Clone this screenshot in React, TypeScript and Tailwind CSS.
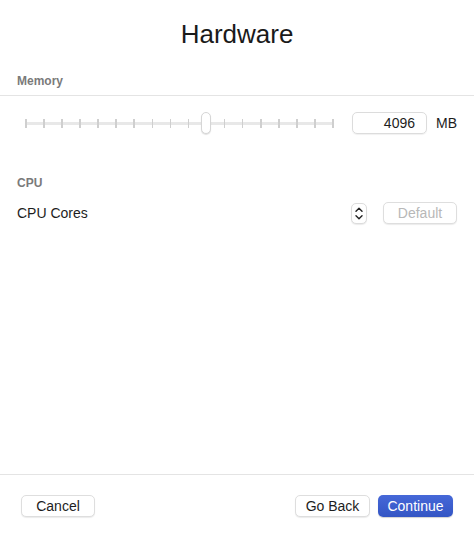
import React from 'react';

const TICKS = Array.from({ length: 18 });

function Slider() {
  return (
    <div className="relative w-[309px] h-[22px]">
      {/* track */}
      <div className="absolute left-0 right-0 top-[10px] h-[3px] rounded-full bg-[#e8e8e8]" />
      {/* ticks */}
      <div className="absolute inset-0 flex items-center justify-between">
        {TICKS.map((_, i) => (
          <span key={i} className="w-[1.5px] h-[9px] bg-[#cfcfcf]" />
        ))}
      </div>
      {/* thumb */}
      <div className="absolute left-[176px] top-0 w-[10px] h-[22px] rounded-full bg-white border border-[#d6d6d6] shadow-[0_1px_1px_rgba(0,0,0,0.12)]" />
    </div>
  );
}

function Stepper() {
  return (
    <div className="w-[16px] h-[21px] rounded-[5px] bg-white border border-[#dcdcdc] shadow-[0_1px_1px_rgba(0,0,0,0.08)] flex flex-col items-center justify-center gap-[3px]">
      <svg width="8" height="5" viewBox="0 0 8 5" fill="none">
        <path d="M1 4.2 L4 1.2 L7 4.2" stroke="#222" strokeWidth="1.4" strokeLinecap="round" strokeLinejoin="round" />
      </svg>
      <svg width="8" height="5" viewBox="0 0 8 5" fill="none">
        <path d="M1 0.8 L4 3.8 L7 0.8" stroke="#222" strokeWidth="1.4" strokeLinecap="round" strokeLinejoin="round" />
      </svg>
    </div>
  );
}

function Button({ children, primary, disabled, className = '' }: { children: React.ReactNode; primary?: boolean; disabled?: boolean; className?: string }) {
  const base = 'h-[22px] rounded-[5px] flex items-center justify-center text-[14px] leading-none';
  if (primary) {
    return (
      <div className={`${base} bg-gradient-to-b from-[#4668d8] to-[#3355c4] text-white shadow-[0_1px_1px_rgba(0,0,0,0.18)] ${className}`}>
        {children}
      </div>
    );
  }
  return (
    <div className={`${base} bg-white border border-[#dedede] shadow-[0_1px_1px_rgba(0,0,0,0.08)] ${disabled ? 'text-[#b8b8b8]' : 'text-[#1d1d1d]'} ${className}`}>
      {children}
    </div>
  );
}

export default function App() {
  return (
    <div className="w-[474px] h-[538px] bg-white flex flex-col font-['Liberation_Sans',Arial,sans-serif] text-[#1d1d1d] overflow-hidden">
      {/* title */}
      <h1 className="pt-[18px] text-center text-[26px] leading-[32px] font-normal text-[#1a1a1a]">Hardware</h1>

      {/* Memory section */}
      <div className="mt-[23px] px-[17px] text-[12px] leading-[16px] font-bold text-[#7a7a7a]">Memory</div>
      <div className="mt-[6px] border-t border-[#e4e4e4]" />

      <div className="mt-[16px] flex items-center pl-[25px]">
        <Slider />
        <div className="ml-[18px] w-[75px] h-[22px] rounded-[5px] border border-[#dcdcdc] shadow-[0_1px_1px_rgba(0,0,0,0.06)] flex items-center justify-end pr-[11px] text-[14px]">
          4096
        </div>
        <span className="ml-[9px] text-[14px]">MB</span>
      </div>

      {/* CPU section */}
      <div className="mt-[41px] px-[17px] text-[12px] leading-[16px] font-bold text-[#7a7a7a]">CPU</div>
      <div className="mt-[11px] flex items-center h-[22px] pl-[17px] pr-[17px]">
        <span className="text-[14px] flex-1">CPU Cores</span>
        <Stepper />
        <Button disabled className="ml-[16px] w-[74px]">Default</Button>
      </div>

      <div className="flex-1" />

      {/* footer */}
      <div className="border-t border-[#e4e4e4] h-[64px] flex items-start pt-[20px] pl-[21px] pr-[21px]">
        <Button className="w-[74px]">Cancel</Button>
        <div className="flex-1" />
        <Button className="w-[75px]">Go Back</Button>
        <Button primary className="ml-[8px] w-[75px]">Continue</Button>
      </div>
    </div>
  );
}
